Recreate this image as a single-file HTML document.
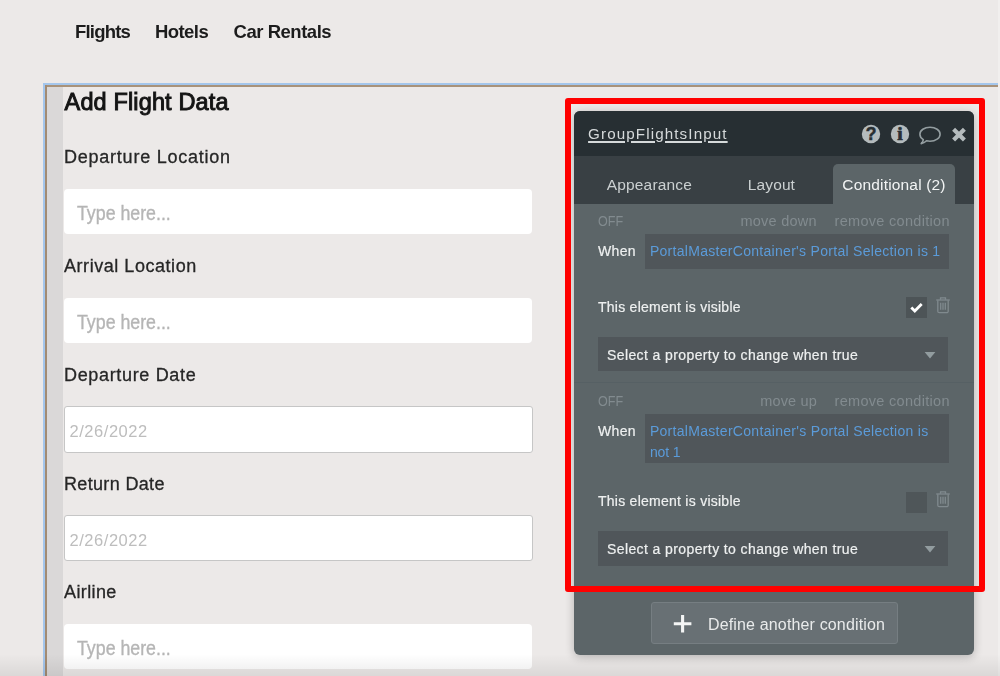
<!DOCTYPE html>
<html><head><meta charset="utf-8"><title>Add Flight Data</title>
<style>
html,body{margin:0;padding:0}
body{width:1000px;height:676px;overflow:hidden;position:relative;background:#ece9e8;font-family:"Liberation Sans",sans-serif}
.t{position:absolute;white-space:pre;margin:0;filter:blur(0.35px)}
.b{position:absolute;box-sizing:border-box}
</style></head><body>
<div class="b" style="left:998px;top:0;width:2px;height:676px;background:#f1efee"></div>
<!-- group border -->
<div class="b" style="left:43px;top:83px;width:955px;height:2px;background:#a4c6ec"></div>
<div class="b" style="left:43px;top:83px;width:2px;height:593px;background:#a4c6ec"></div>
<div class="b" style="left:45px;top:85px;width:953px;height:2px;background:#a8927a"></div>
<div class="b" style="left:45px;top:85px;width:2px;height:591px;background:#a38b72"></div>
<div class="b" style="left:47px;top:87px;width:15.500px;height:589px;background:#dad8d8"></div>
<!-- inputs -->
<div class="b" style="left:64px;top:189px;width:468px;height:45px;background:#fff;border-radius:4px"></div>
<div class="b" style="left:64px;top:298px;width:468px;height:45px;background:#fff;border-radius:4px"></div>
<div class="b" style="left:63.5px;top:406px;width:469px;height:46.5px;background:#fff;border:1px solid #c6c6c6;border-radius:3px"></div>
<div class="b" style="left:63.5px;top:514.5px;width:469px;height:46.5px;background:#fff;border:1px solid #c6c6c6;border-radius:3px"></div>
<div class="b" style="left:64px;top:624px;width:468px;height:45px;background:#fff;border-radius:4px"></div>
<!-- panel -->
<div class="b" style="left:574px;top:110.5px;width:399.5px;height:544px;background:#5c6568;border-radius:6px;box-shadow:0 2px 10px rgba(0,0,0,.24);overflow:hidden">
  <div class="b" style="left:0;top:0;width:100%;height:45px;background:#272f33"></div>
  <div class="b" style="left:0;top:45px;width:100%;height:48.5px;background:#394044"></div>
  <div class="b" style="left:258.5px;top:53.5px;width:122px;height:41px;background:#5c6568;border-radius:5px 5px 0 0"></div>
  <div class="b" style="left:0;top:271px;width:100%;height:1px;background:#566064"></div>
</div>
<!-- header icons -->
<svg class="b" style="left:860px;top:122px" width="112" height="26" viewBox="860 122 112 26">
  <circle cx="871" cy="134" r="9.2" fill="#b4bbbd"/>
  <text x="871" y="140.200" text-anchor="middle" font-family="Liberation Sans, sans-serif" font-weight="700" font-size="17.5" fill="#272f33" stroke="#272f33" stroke-width="0.5">?</text>
  <circle cx="900" cy="134" r="9.2" fill="#b4bbbd"/>
  <text x="900" y="140" text-anchor="middle" font-family="Liberation Serif, serif" font-weight="700" font-size="19.5" fill="#272f33" stroke="#272f33" stroke-width="0.7">i</text>
  <path d="M930 127.2c5.6 0 10.1 3.1 10.1 7s-4.500 7-10.100 7c-1.200 0-2.400-.150-3.500-.400c-1.500 1.500-3.300 2.500-5.300 2.900c1.200-1.100 1.900-2.500 2.100-4.100c-2.100-1.300-3.400-3.200-3.400-5.400c0-3.900 4.500-7 10.100-7z" fill="none" stroke="#939da0" stroke-width="1.600" stroke-linejoin="round"/>
  <path d="M953.600 129.300l10.800 10.800M964.400 129.300l-10.800 10.800" stroke="#b4bbbd" stroke-width="4.2" stroke-linecap="butt"/>
</svg>
<!-- condition 1 -->
<div class="b" style="left:644.5px;top:234px;width:304.500px;height:34.500px;background:#50565a"></div>
<div class="b" style="left:905.5px;top:297px;width:21px;height:21px;background:#4d5457"></div>
<svg class="b" style="left:905.5px;top:296.500px" width="21" height="21" viewBox="0 0 21 21"><path d="M5.300 10.600l3.500 3.500l6.900-7" fill="none" stroke="#fff" stroke-width="2.800"/></svg>
<div class="b" style="left:597.500px;top:336.500px;width:350.500px;height:34.500px;background:#50565a"></div>
<svg class="b" style="left:924px;top:351px" width="13" height="9" viewBox="0 0 13 9"><path d="M0.600 1.100h10.800L6 7.400z" fill="#929c9f"/></svg>
<!-- condition 2 -->
<div class="b" style="left:644.5px;top:414px;width:304.500px;height:49px;background:#50565a"></div>
<div class="b" style="left:905.5px;top:491.800px;width:21px;height:21px;background:#4f5659"></div>
<div class="b" style="left:597.500px;top:530.500px;width:350.500px;height:35px;background:#50565a"></div>
<svg class="b" style="left:924px;top:545px" width="13" height="9" viewBox="0 0 13 9"><path d="M0.600 1.100h10.800L6 7.400z" fill="#929c9f"/></svg>
<!-- trash icons -->
<svg class="b" style="left:935px;top:296.300px" width="16" height="18" viewBox="0 0 16 18"><g fill="none" stroke="#808a8e" stroke-width="1.300"><path d="M1.200 4h13.600"/><path d="M5.500 3.800V1.800h5v2"/><path d="M2.800 4.200v11a1.500 1.500 0 0 0 1.500 1.500h7.400a1.500 1.500 0 0 0 1.500-1.500v-11"/><path d="M5.700 6.800v7M8 6.800v7M10.300 6.800v7"/></g></svg>
<svg class="b" style="left:935px;top:490.200px" width="16" height="18" viewBox="0 0 16 18"><g fill="none" stroke="#808a8e" stroke-width="1.300"><path d="M1.200 4h13.600"/><path d="M5.500 3.800V1.800h5v2"/><path d="M2.800 4.200v11a1.500 1.500 0 0 0 1.500 1.500h7.400a1.500 1.500 0 0 0 1.500-1.500v-11"/><path d="M5.700 6.800v7M8 6.800v7M10.300 6.800v7"/></g></svg>
<!-- button -->
<div class="b" style="left:650.5px;top:602px;width:247.500px;height:42px;background:#687074;border:1px solid #767e82;border-radius:3px"></div>
<svg class="b" style="left:673px;top:614px" width="20" height="20" viewBox="0 0 20 20"><path d="M9.600 1v17.600M0.800 9.800h17.600" stroke="#f4f5f5" stroke-width="3.100"/></svg>

<div class="t" style="left:75.0px;top:21.09px;font-size:18.5px;line-height:22px;font-weight:700;color:#1c1c1c;letter-spacing:-0.806px;">Flights</div>
<div class="t" style="left:155.0px;top:21.09px;font-size:18.5px;line-height:22px;font-weight:700;color:#1c1c1c;letter-spacing:-0.572px;">Hotels</div>
<div class="t" style="left:233.6px;top:21.09px;font-size:18.5px;line-height:22px;font-weight:700;color:#1c1c1c;letter-spacing:-0.479px;">Car Rentals</div>
<div class="t" style="left:64.6px;top:87.86px;font-size:23.5px;line-height:28px;font-weight:400;color:#141414;letter-spacing:0.139px;-webkit-text-stroke:0.95px #141414;">Add Flight Data</div>
<div class="t" style="left:64.0px;top:146.36px;font-size:18px;line-height:22px;font-weight:400;color:#262626;letter-spacing:0.765px;-webkit-text-stroke:0.3px #262626;">Departure Location</div>
<div class="t" style="left:64.0px;top:255.11px;font-size:18px;line-height:22px;font-weight:400;color:#262626;letter-spacing:0.544px;-webkit-text-stroke:0.3px #262626;">Arrival Location</div>
<div class="t" style="left:64.0px;top:363.86px;font-size:18px;line-height:22px;font-weight:400;color:#262626;letter-spacing:0.661px;-webkit-text-stroke:0.3px #262626;">Departure Date</div>
<div class="t" style="left:64.0px;top:472.61px;font-size:18px;line-height:22px;font-weight:400;color:#262626;letter-spacing:0.337px;-webkit-text-stroke:0.3px #262626;">Return Date</div>
<div class="t" style="left:64.0px;top:581.36px;font-size:18px;line-height:22px;font-weight:400;color:#262626;letter-spacing:0.380px;-webkit-text-stroke:0.3px #262626;">Airline</div>
<div class="t" style="left:76.8px;top:201.94px;font-size:19.5px;line-height:23px;font-weight:400;color:#b5b5b5;transform:scaleX(0.9108);transform-origin:0 0;-webkit-text-stroke:0.35px #b5b5b5;">Type here...</div>
<div class="t" style="left:76.8px;top:310.69px;font-size:19.5px;line-height:23px;font-weight:400;color:#b5b5b5;transform:scaleX(0.9108);transform-origin:0 0;-webkit-text-stroke:0.35px #b5b5b5;">Type here...</div>
<div class="t" style="left:76.8px;top:636.94px;font-size:19.5px;line-height:23px;font-weight:400;color:#b5b5b5;transform:scaleX(0.9108);transform-origin:0 0;-webkit-text-stroke:0.35px #b5b5b5;">Type here...</div>
<div class="t" style="left:69.5px;top:420.98px;font-size:16.5px;line-height:20px;font-weight:400;color:#bdbdbd;letter-spacing:0.540px;">2/26/2022</div>
<div class="t" style="left:69.5px;top:529.73px;font-size:16.5px;line-height:20px;font-weight:400;color:#bdbdbd;letter-spacing:0.540px;">2/26/2022</div>
<div class="t" style="left:588.1px;top:124.93px;font-size:15.2px;line-height:18px;font-weight:400;color:#d6dadb;letter-spacing:1.107px;text-decoration:underline;text-underline-offset:1.500px;text-decoration-thickness:1.500px;">GroupFlightsInput</div>
<div class="t" style="left:606.7px;top:175.43px;font-size:15.5px;line-height:19px;font-weight:400;color:#cbd0d1;letter-spacing:0.180px;">Appearance</div>
<div class="t" style="left:747.8px;top:175.43px;font-size:15.5px;line-height:19px;font-weight:400;color:#cbd0d1;letter-spacing:0.119px;">Layout</div>
<div class="t" style="left:842.3px;top:175.43px;font-size:15.5px;line-height:19px;font-weight:400;color:#f2f4f4;letter-spacing:0.172px;">Conditional (2)</div>
<div class="t" style="left:598.0px;top:212.68px;font-size:14.5px;line-height:17px;font-weight:400;color:#828b8f;transform:scaleX(0.8690);transform-origin:0 0;">OFF</div>
<div class="t" style="left:740.4px;top:212.68px;font-size:14.5px;line-height:17px;font-weight:400;color:#828b8f;letter-spacing:0.264px;">move down</div>
<div class="t" style="left:834.6px;top:212.68px;font-size:14.5px;line-height:17px;font-weight:400;color:#828b8f;letter-spacing:0.295px;">remove condition</div>
<div class="t" style="left:598.0px;top:242.95px;font-size:14px;line-height:17px;font-weight:400;color:#eef0f0;letter-spacing:0.349px;-webkit-text-stroke:0.2px #eef0f0;">When</div>
<div class="t" style="left:598.0px;top:393.18px;font-size:14.5px;line-height:17px;font-weight:400;color:#828b8f;transform:scaleX(0.8690);transform-origin:0 0;">OFF</div>
<div class="t" style="left:760.2px;top:393.18px;font-size:14.5px;line-height:17px;font-weight:400;color:#828b8f;letter-spacing:0.150px;">move up</div>
<div class="t" style="left:834.6px;top:393.18px;font-size:14.5px;line-height:17px;font-weight:400;color:#828b8f;letter-spacing:0.295px;">remove condition</div>
<div class="t" style="left:598.0px;top:422.95px;font-size:14px;line-height:17px;font-weight:400;color:#eef0f0;letter-spacing:0.349px;-webkit-text-stroke:0.2px #eef0f0;">When</div>
<div class="t" style="left:649.9px;top:242.95px;font-size:14px;line-height:17px;font-weight:400;color:#5b9bd9;letter-spacing:0.293px;">PortalMasterContainer's Portal Selection is 1</div>
<div class="t" style="left:649.9px;top:422.85px;font-size:14px;line-height:17px;font-weight:400;color:#5b9bd9;letter-spacing:0.301px;">PortalMasterContainer's Portal Selection is</div>
<div class="t" style="left:649.9px;top:443.85px;font-size:14px;line-height:17px;font-weight:400;color:#5b9bd9;letter-spacing:-0.120px;">not 1</div>
<div class="t" style="left:598.0px;top:298.65px;font-size:14px;line-height:17px;font-weight:400;color:#eef0f0;letter-spacing:0.256px;-webkit-text-stroke:0.2px #eef0f0;">This element is visible</div>
<div class="t" style="left:607.0px;top:347.15px;font-size:14px;line-height:17px;font-weight:400;color:#eef0f0;letter-spacing:0.395px;-webkit-text-stroke:0.2px #eef0f0;">Select a property to change when true</div>
<div class="t" style="left:598.0px;top:492.65px;font-size:14px;line-height:17px;font-weight:400;color:#eef0f0;letter-spacing:0.256px;-webkit-text-stroke:0.2px #eef0f0;">This element is visible</div>
<div class="t" style="left:607.0px;top:541.15px;font-size:14px;line-height:17px;font-weight:400;color:#eef0f0;letter-spacing:0.395px;-webkit-text-stroke:0.2px #eef0f0;">Select a property to change when true</div>
<div class="t" style="left:708.0px;top:614.76px;font-size:16px;line-height:19px;font-weight:400;color:#e9ebeb;letter-spacing:0.151px;">Define another condition</div>
<div class="b" style="left:565px;top:98px;width:420px;height:494px;border:6px solid #ff0000;border-radius:3px"></div>
<div class="b" style="left:0;top:654px;width:1000px;height:22px;background:linear-gradient(to bottom,rgba(0,0,0,0),rgba(0,0,0,0.075))"></div>
</body></html>
